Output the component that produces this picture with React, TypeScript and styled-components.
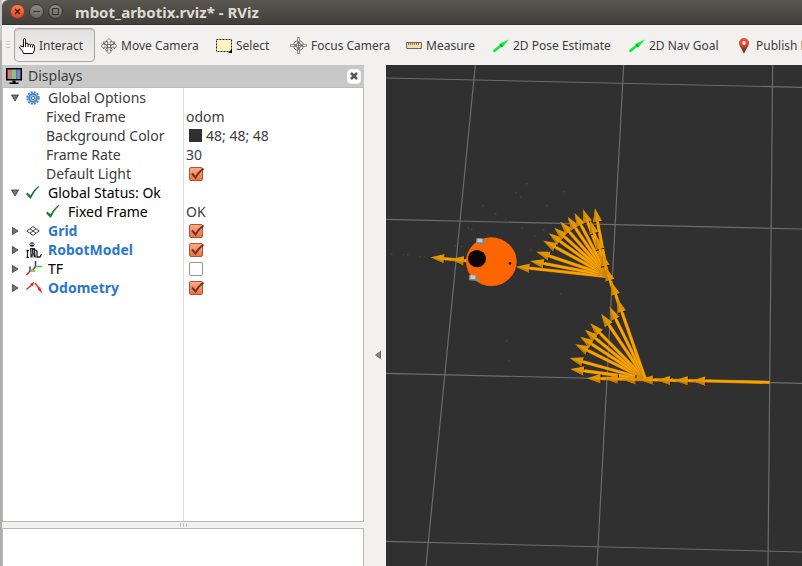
import React, { useState } from "react";
import styled, { createGlobalStyle, css } from "styled-components";

const GlobalStyle = createGlobalStyle`
  * { box-sizing: border-box; }
  body { margin: 0; background: #f2f1f0; font-family: "Noto Sans", "Open Sans", sans-serif; color: #3c3c3c; }
  button { font: inherit; color: inherit; border: 0; background: none; padding: 0; margin: 0; }
  svg { display: block; flex: none; }
`;

const Desktop = styled.div`
  height: 100vh;
  padding-left: 2px;
  background: linear-gradient(#c4c4c4, #c4c4c4 40px, #adadad 41px);
  overflow: hidden;
`;

const Window = styled.div`
  height: 100%;
  display: flex;
  flex-direction: column;
  background: #f2f1f0;
`;

const TitleBar = styled.header`
  height: 25px;
  flex: none;
  display: flex;
  align-items: center;
  gap: 4px;
  padding: 0 8px 1px;
  border-radius: 6px 0 0 0;
  border-bottom: 1px solid #33322e;
  background: linear-gradient(#59574f, #403f3a);
`;

const WindowButton = styled.button<{ $close?: boolean }>`
  width: 15px;
  height: 15px;
  display: grid;
  place-items: center;
  border-radius: 50%;
  border: 1px solid ${(p) => (p.$close ? "#8f3a1e" : "#33322e")};
  background: ${(p) => (p.$close ? "linear-gradient(#f58059, #e2491c)" : "linear-gradient(#8c8a82, #68665f)")};
`;

const Title = styled.h1`
  margin: 0 0 0 8px;
  font-size: 15px;
  line-height: 20px;
  font-weight: 700;
  color: #dfdbd2;
  white-space: nowrap;
`;

const Toolbar = styled.nav`
  height: 40px;
  flex: none;
  display: flex;
  align-items: center;
  overflow: hidden;
  padding: 0 0 1px 4px;
`;

const ToolbarGrip = styled.div`
  width: 4px;
  height: 8px;
  flex: none;
  margin-right: 4px;
  background: repeating-linear-gradient(#cbc8c5 0 1px, transparent 1px 3px);
`;

const ToolButton = styled.button<{ $width: number; $active?: boolean }>`
  width: ${(p) => p.$width}px;
  height: 34px;
  flex: none;
  display: flex;
  align-items: center;
  gap: 4px;
  padding: 2px 4px 0;
  font-size: 12px;
  line-height: 16px;
  white-space: nowrap;
  border: 1px solid transparent;
  ${(p) =>
    p.$active &&
    css`
      margin-right: 1px;
      padding-top: 3px;
      border-color: #a9a6a2;
      border-radius: 4px;
      background: linear-gradient(#e3e1df, #f0efed);
      box-shadow: inset 0 1px 1px #cfccc9;
    `}
`;

const Body = styled.main`
  flex: 1;
  min-height: 0;
  display: grid;
  grid-template-columns: 362px 22px minmax(0, 1fr);
`;

const Side = styled.section`
  min-height: 0;
  display: grid;
  grid-template-rows: 22px minmax(0, 1fr) 6px 38px;
`;

const PanelHeader = styled.div`
  display: flex;
  align-items: center;
  gap: 6px;
  padding: 0 3px 0 4px;
  background: #c8c8c8;
`;

const PanelTitle = styled.h2`
  flex: 1;
  margin: 0;
  font-size: 14px;
  line-height: 20px;
  font-weight: 400;
`;

const CloseButton = styled.button`
  width: 14px;
  height: 15px;
  display: grid;
  place-items: center;
  border: 1px solid #f4f4f4;
  border-radius: 4px;
  background: #ffffff;
`;

const TreeBox = styled.div`
  overflow: hidden;
  display: flex;
  flex-direction: column;
  background: #ffffff;
  border: 1px solid #bdb9b5;
`;

const Tree = styled.table`
  width: 100%;
  flex: none;
  border-collapse: separate;
  border-spacing: 0;
  table-layout: fixed;
  font-size: 14px;
  line-height: 19px;
`;

const NameColumn = styled.col`
  width: 181px;
`;

const TreeRow = styled.tr`
  height: 19px;
`;

const NameCell = styled.th`
  padding: 0;
  height: 19px;
  font-weight: inherit;
  text-align: left;
  border-right: 1px solid #dcdcdc;
`;

const ValueCell = styled.td`
  padding: 0 0 0 2px;
  height: 19px;
`;

type Tone = "normal" | "status" | "display";

const NameLine = styled.div<{ $indent: number; $tone: Tone }>`
  height: 19px;
  display: flex;
  align-items: center;
  padding-left: ${(p) => p.$indent}px;
  white-space: nowrap;
  font-weight: ${(p) => (p.$tone === "display" ? 700 : 400)};
  color: ${(p) => (p.$tone === "display" ? "#2a77c8" : p.$tone === "status" ? "#000000" : "#3c3c3c")};
`;

const Expander = styled.button`
  width: 15px;
  height: 19px;
  display: grid;
  place-items: start;
  align-items: center;
`;

const IconSlot = styled.span`
  width: 22px;
  display: flex;
`;

const ValueLine = styled.div`
  height: 19px;
  display: flex;
  align-items: center;
  gap: 4px;
`;

const Swatch = styled.span`
  width: 13px;
  height: 13px;
  margin-left: 3px;
  background: #303030;
`;

/* Keeps the divider between the two columns visible under the last row. */
const TreeFill = styled.div`
  flex: 1;
  width: 181px;
  border-right: 1px solid #dcdcdc;
`;

const CheckWrap = styled.label`
  display: grid;
  margin-left: 3px;
  > * { grid-area: 1 / 1; }
  > svg { pointer-events: none; }
`;

const CheckInput = styled.input`
  appearance: none;
  width: 14px;
  height: 14px;
  margin: 0;
  border: 1px solid #96928e;
  border-radius: 2px;
  background: #ffffff;
  &:checked {
    border-color: #b0532f;
    background: linear-gradient(#f9a98a, #ee7446);
  }
`;

const Splitter = styled.div`
  display: grid;
  place-items: center;
  > span {
    width: 7px;
    height: 4px;
    background: repeating-linear-gradient(90deg, #c4c1be 0 1px, transparent 1px 3px);
  }
`;

const Details = styled.div`
  background: #ffffff;
  border: 1px solid #bdb9b5;
  border-bottom: 0;
`;

const CollapseBar = styled.button`
  display: grid;
  place-items: center;
  padding: 78px 0 0 6px;
`;

const Viewport = styled.section`
  min-width: 0;
  min-height: 0;
  overflow: hidden;
  background: #303030;
  > svg { width: 100%; height: 100%; }
`;

const HandIcon = () => (
  <svg width="16" height="16" viewBox="0 0 16 16">
    <path d="M4.5 9V1.5Q4.5.5 5.5.5T6.5 1.5V6Q7 5 8 5.2T9 6.5Q10 5.3 11.5 6.8Q12.5 5.8 13.5 7Q15.5 6 15.5 8.5V12L14 15.5H4.5L3.5 13L.8 10Q.3 8.5 1.5 8Z" fill="#fff" stroke="#111" strokeLinejoin="round" />
    <path d="M6.5 6v3M9 6.5V9M11.5 7v2.2M13.5 7.5v2" stroke="#111" fill="none" />
  </svg>
);
const MoveIcon = () => (
  <svg width="16" height="16" viewBox="0 0 16 16" fill="#fff" stroke="#555" strokeWidth="0.8">
    <path d="M8 .5 11 3.5H9.2V6.8H13V5L15.6 8 13 11V9.2H9.2V12.5H11L8 15.5 5 12.5H6.8V9.2H3V11L.4 8 3 5V6.8H6.8V3.5H5Z" />
    <path d="M2.5 4.2 6 8M13.5 4.2 10 8M2 4h3M14 4h-3M4.5 11.5 7 9M11.5 11.5 9 9" />
    <circle cx="8" cy="8" r="1.6" />
  </svg>
);
const SelectIcon = () => (
  <svg width="16" height="14" viewBox="0 0 16 14">
    <rect x=".5" y=".5" width="15" height="12" fill="#fdf5bd" stroke="#222" strokeDasharray="2 1" />
    <path d="M16 10v4h-4Z" />
  </svg>
);
const FocusIcon = () => (
  <svg width="17" height="17" viewBox="0 0 17 17" fill="none" stroke="#777">
    <circle cx="8.5" cy="8.5" r="5" />
    <circle cx="8.5" cy="8.5" r="2.5" />
    <path d="M7.5 6V.5h2V6M7.5 11v5.500h2V11M6 7.500H.5v2H6M11 7.500h5.500v2H11" fill="#f2f1f0" strokeWidth=".8" />
    <path d="M8.500 4v9M4 8.500h9" />
  </svg>
);
const MeasureIcon = () => (
  <svg width="16" height="7" viewBox="0 0 16 7">
    <rect x=".5" y=".5" width="15" height="6" rx=".5" fill="#f1dfa5" stroke="#666" />
    <path d="M2.500 1v2M4.500 1v2M6.500 1v2M8.500 1v2M10.500 1v2M12.500 1v2" stroke="#777" />
  </svg>
);
const GreenArrow = () => (
  <svg width="16" height="14" viewBox="0 0 16 14">
    <path d="M.5 12.500 8 6.500" stroke="#00f02c" strokeWidth="2.500" />
    <path d="M6 5 16 .5 9 8.500Z" fill="#00f52e" />
    <path d="M7.500 5.500 9 7.500" stroke="#056b18" strokeWidth="1.200" />
  </svg>
);
const PinIcon = () => (
  <svg width="16" height="16" viewBox="0 0 16 16">
    <defs>
      <linearGradient id="pin" x2="0" y2="1">
        <stop offset="0" stopColor="#f25a38" />
        <stop offset=".5" stopColor="#c5452a" />
        <stop offset="1" stopColor="#3b1c10" />
      </linearGradient>
    </defs>
    <path d="M8 0a5 5 0 0 1 5 5C13 8.500 9.500 11 8 16 6.500 11 3 8.500 3 5a5 5 0 0 1 5-5Z" fill="url(#pin)" />
    <circle cx="8" cy="5" r="1.900" fill="#f5dcd4" />
  </svg>
);
const MonitorIcon = () => (
  <svg width="16" height="16" viewBox="0 0 16 16">
    <path d="M0 0h16v12.500H0Z" />
    <path d="M1.500 1.500H6v9.500H1.500Z" fill="#d47880" />
    <path d="M6 1.500h4.500v9.500H6Z" fill="#7cc88a" />
    <path d="M10.500 1.500h4v9.500h-4Z" fill="#8581d0" />
    <path d="M6.500 12.500h3v2h3V16h-9v-1.500h3Z" />
  </svg>
);
const GearIcon = () => (
  <svg width="14" height="14" viewBox="0 0 14 14" fill="none">
    <circle cx="7" cy="7" r="5.800" stroke="#3e78bd" strokeWidth="1.800" strokeDasharray="1.900 1.137" />
    <circle cx="7" cy="7" r="3.900" fill="#a9c8ea" stroke="#4d86c9" strokeWidth="2" />
    <circle cx="7" cy="7" r="1.600" fill="#fff" stroke="#3e78bd" />
  </svg>
);
const TickIcon = () => (
  <svg width="14" height="13" viewBox="0 0 14 13">
    <path d="M0 8 1.500 6.500 4.500 9.500Q8 3 12.500 0L13.500.5Q8.500 5 5 12.500H4Z" fill="#1c7a28" />
  </svg>
);
const GridIcon = () => (
  <svg width="14" height="10" viewBox="0 0 14 10" fill="none" stroke="#444">
    <path d="M7 .6 13.200 5 7 9.400.8 5ZM4 2.800 10 7.200M10 2.800 4 7.200" />
  </svg>
);
const RobotIcon = () => (
  <svg width="16" height="16" viewBox="0 0 16 16">
    <ellipse cx="6" cy="2.500" rx="2.500" ry="2.300" fill="#17191e" />
    <path d="M4 2.200h4" stroke="#9db7df" strokeWidth="1.500" />
    <path d="M4 6h5v3.500l1 6H7.800L7 11l-.5 4.500H4.500Z" fill="#26282b" />
    <path d="M1.500 8v7.500M.5 8.500H3M9.500 7.500l1.500 2v5.500h3L15.500 12M.5 15.500h2.500" fill="none" stroke="#222" strokeWidth="1.300" />
    <path d="M5.500 7v5M7.500 8v3" stroke="#aaa" strokeWidth=".8" />
  </svg>
);
const TfIcon = () => (
  <svg width="16" height="15" viewBox="0 0 16 15" fill="none" strokeWidth="1.500">
    <path d="M4 10 9.500 5.500" stroke="#d9c51d" strokeWidth="1" />
    <path d="M4 10V5.500M9.500 5.500V0" stroke="#2430ff" />
    <path d="M4 10h5M9.500 5.500H16" stroke="#18e830" />
    <path d="M4 10 .5 14M9.500 5.500 7 9" stroke="#f01818" />
  </svg>
);
const OdometryIcon = () => (
  <svg width="17" height="14" viewBox="0 0 17 14" fill="#e92512">
    <path d="M.5 8.500 5.500 4" stroke="#e92512" strokeWidth="1.300" />
    <path d="M4 3 8.500.8 6.500 5.500ZM11.500 8 14 6 16.500 12.800Z" />
    <path d="M9 2 13.500 8" stroke="#e92512" strokeWidth="1.300" />
  </svg>
);

const tools = [
  { label: "Interact", Icon: HandIcon, width: 81 },
  { label: "Move Camera", Icon: MoveIcon, width: 115 },
  { label: "Select", Icon: SelectIcon, width: 74 },
  { label: "Focus Camera", Icon: FocusIcon, width: 116 },
  { label: "Measure", Icon: MeasureIcon, width: 87 },
  { label: "2D Pose Estimate", Icon: GreenArrow, width: 136 },
  { label: "2D Nav Goal", Icon: GreenArrow, width: 107 },
  { label: "Publish Point", Icon: PinIcon, width: 112 },
];

interface Property {
  name: string;
  indent: number;
  tone?: Tone;
  open?: boolean;
  Icon?: React.FC;
  value?: string;
  swatch?: boolean;
  checked?: boolean;
}

const properties: Property[] = [
  { name: "Global Options", indent: 8, open: true, Icon: GearIcon },
  { name: "Fixed Frame", indent: 43, value: "odom" },
  { name: "Background Color", indent: 43, value: "48; 48; 48", swatch: true },
  { name: "Frame Rate", indent: 43, value: "30" },
  { name: "Default Light", indent: 43, checked: true },
  { name: "Global Status: Ok", indent: 8, tone: "status", open: true, Icon: TickIcon },
  { name: "Fixed Frame", indent: 43, tone: "status", Icon: TickIcon, value: "OK" },
  { name: "Grid", indent: 8, tone: "display", open: false, Icon: GridIcon, checked: true },
  { name: "RobotModel", indent: 8, tone: "display", open: false, Icon: RobotIcon, checked: true },
  { name: "TF", indent: 8, tone: "status", open: false, Icon: TfIcon, checked: false },
  { name: "Odometry", indent: 8, tone: "display", open: false, Icon: OdometryIcon, checked: true },
];

function CheckBox({ initial, label }: { initial: boolean; label: string }) {
  const [on, setOn] = useState(initial);
  return (
    <CheckWrap>
      <CheckInput type="checkbox" aria-label={label} checked={on} onChange={(e) => setOn(e.target.checked)} />
      {on && (
        <svg width="16" height="14" viewBox="0 0 16 14">
          <path d="M3 6.500 6.500 10.500Q9.500 5 14.500 1.500" fill="none" stroke="#6e3620" strokeWidth="2" />
        </svg>
      )}
    </CheckWrap>
  );
}

function PropertyRow({ name, indent, tone = "normal", open, Icon, value, swatch, checked }: Property) {
  return (
    <TreeRow>
      <NameCell scope="row">
        <NameLine $indent={indent} $tone={tone}>
          {open !== undefined && (
            <Expander aria-label={`Toggle ${name}`} aria-expanded={open}>
              <svg width="8" height="8" viewBox="0 0 8 8" fill="#777" stroke="#333" strokeWidth=".8">
                <path d={open ? "M.5 1h7L4 7Z" : "M1.500.500v7L7 4Z"} />
              </svg>
            </Expander>
          )}
          {Icon && (
            <IconSlot>
              <Icon />
            </IconSlot>
          )}
          {name}
        </NameLine>
      </NameCell>
      <ValueCell>
        <ValueLine>
          {swatch && <Swatch />}
          {value}
          {checked !== undefined && <CheckBox initial={checked} label={name} />}
        </ValueLine>
      </ValueCell>
    </TreeRow>
  );
}

type Segment = [number, number, number, number];

/* Scene units are a third of a screen pixel. */
const gridLines: Segment[] = [
  [0, 39, 1248, 67], [0, 463, 1248, 492], [0, 925, 1248, 955], [0, 1429, 1248, 1461],
  [268, 0, 120, 1503], [713, 0, 633, 1503], [1160, 0, 1146, 1503],
];

const poses: Segment[] = [
  [1151, 952, 917, 947], [960, 948, 865, 946], [900, 947, 812, 945], [860, 945, 760, 944],
  [800, 944, 708, 943], [790, 943, 655, 941], [780, 942, 603, 940],
  [778, 942, 553, 912], [778, 942, 551, 879], [778, 942, 568, 838], [778, 942, 583, 815],
  [778, 942, 597, 794], [778, 942, 613, 775], [778, 942, 646, 746], [778, 942, 671, 725],
  [778, 942, 694, 702], [706, 740, 676, 650], [686, 690, 660, 607],
  [665, 635, 390, 605], [665, 632, 433, 588], [665, 632, 451, 560], [665, 632, 472, 527],
  [665, 632, 489, 505], [665, 632, 505, 488], [665, 632, 523, 470], [665, 632, 545, 455],
  [665, 632, 566, 444], [665, 632, 591, 433], [665, 632, 612, 466], [665, 632, 631, 513],
  [665, 632, 648, 563], [665, 632, 627, 430],
  [260, 589, 193, 583], [240, 587, 134, 577],
];

const scanPoints = [
  [16, 566], [50, 568], [64, 568], [100, 574], [115, 574], [290, 421], [328, 445], [358, 460], [388, 382], [403, 394],
  [421, 355], [481, 421], [532, 379], [246, 488], [256, 492], [407, 488], [445, 511], [433, 553], [523, 685],
  [361, 826], [367, 886], [206, 541], [225, 543], [305, 508], [472, 493],
];

const placement = ([x1, y1, x2, y2]: Segment) => ({
  length: Math.hypot(x2 - x1, y2 - y1),
  transform: `translate(${x1} ${y1}) rotate(${(Math.atan2(y2 - y1, x2 - x1) * 180) / Math.PI})`,
});

function Shaft({ at }: { at: Segment }) {
  const { length, transform } = placement(at);
  return (
    <g transform={transform}>
      <path d={`M0 0H${length - 40}`} stroke="#c17d02" strokeWidth="10" />
      <path d={`M0 0H${length - 40}`} stroke="#fba400" strokeWidth="7" />
    </g>
  );
}

function Head({ at }: { at: Segment }) {
  const { length, transform } = placement(at);
  const base = length - 42;
  return (
    <g transform={transform}>
      <path d={`M${base} -14L${length} 0L${base} 14Z`} fill="#e39600" />
      <path d={`M${base} -14L${length} 0L${base} -6Z`} fill="#c37f05" />
      <path d={`M${base} -13V-4M${base} 4V13`} stroke="#171003" strokeWidth="3" />
    </g>
  );
}

function Scene() {
  return (
    <svg viewBox="0 0 1248 1503" preserveAspectRatio="xMinYMin slice" role="img" aria-label="Robot trajectory">
      {gridLines.map(([x1, y1, x2, y2], i) => (
        <line key={i} x1={x1} y1={y1} x2={x2} y2={y2} stroke="#6d6d6d" strokeWidth="3.500" />
      ))}
      {scanPoints.map(([x, y], i) => (
        <rect key={i} x={x} y={y} width="3" height="3" fill="#5c5c48" />
      ))}
      {poses.map((at, i) => (
        <Shaft key={i} at={at} />
      ))}
      {poses.map((at, i) => (
        <Head key={i} at={at} />
      ))}
      <ellipse cx="316" cy="590" rx="76" ry="73" fill="#fc6500" />
      <g transform="rotate(5 283 529)">
        <rect x="270" y="521" width="27" height="16" fill="#858585" />
        <rect x="274" y="521" width="15" height="11" fill="#c9c9c9" />
      </g>
      <g transform="rotate(5 262 639)">
        <rect x="249" y="631" width="27" height="16" fill="#858585" />
        <rect x="253" y="631" width="15" height="11" fill="#c9c9c9" />
      </g>
      <ellipse cx="273" cy="581" rx="27" ry="26" fill="#0d0501" />
      <circle cx="372" cy="595" r="4" fill="#240f02" />
    </svg>
  );
}

export default function App() {
  const [tool, setTool] = useState("Interact");
  return (
    <>
      <GlobalStyle />
      <Desktop>
        <Window>
          <TitleBar>
            <WindowButton $close aria-label="Close">
              <svg width="7" height="7" viewBox="0 0 7 7" stroke="#4a1c0d" strokeWidth="1.500">
                <path d="m1 1 5 5M6 1 1 6" />
              </svg>
            </WindowButton>
            <WindowButton aria-label="Minimize">
              <svg width="7" height="7" viewBox="0 0 7 7" stroke="#33322e">
                <path d="M0 3.500h7" />
              </svg>
            </WindowButton>
            <WindowButton aria-label="Maximize">
              <svg width="7" height="7" viewBox="0 0 7 7" fill="none" stroke="#33322e">
                <path d="M.5.5h6v6h-6Z" />
              </svg>
            </WindowButton>
            <Title>mbot_arbotix.rviz* - RViz</Title>
          </TitleBar>
          <Toolbar>
            <ToolbarGrip />
            {tools.map(({ label, Icon, width }) => (
              <ToolButton key={label} $width={width} $active={tool === label} onClick={() => setTool(label)}>
                <Icon />
                {label}
              </ToolButton>
            ))}
          </Toolbar>
          <Body>
            <Side>
              <PanelHeader>
                <MonitorIcon />
                <PanelTitle>Displays</PanelTitle>
                <CloseButton aria-label="Close Displays">
                  <svg width="8" height="8" viewBox="0 0 8 8" stroke="#555" strokeWidth="2.500">
                    <path d="m1 1 6 6M7 1 1 7" />
                  </svg>
                </CloseButton>
              </PanelHeader>
              <TreeBox>
                <Tree aria-label="Display properties">
                  <colgroup>
                    <NameColumn />
                    <col />
                  </colgroup>
                  <tbody>
                    {properties.map((p, i) => (
                      <PropertyRow key={i} {...p} />
                    ))}
                  </tbody>
                </Tree>
                <TreeFill />
              </TreeBox>
              <Splitter>
                <span />
              </Splitter>
              <Details />
            </Side>
            <CollapseBar aria-label="Collapse panel">
              <svg width="6" height="8" viewBox="0 0 6 8" fill="#888" stroke="#555" strokeWidth=".8">
                <path d="M5.500.500v7L.5 4Z" />
              </svg>
            </CollapseBar>
            <Viewport>
              <Scene />
            </Viewport>
          </Body>
        </Window>
      </Desktop>
    </>
  );
}
